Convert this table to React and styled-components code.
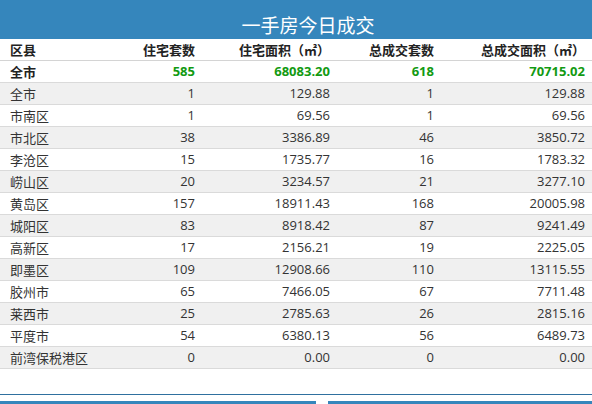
import React from "react";
import styled, { createGlobalStyle } from "styled-components";

const Global = createGlobalStyle`
  html, body { margin: 0; padding: 0; overflow: hidden; background: #fff; }
  body { font-family: "Open Sans", "Noto Sans CJK SC", sans-serif; }
`;

const Page = styled.div`
  width: 592px;
  display: flex;
  flex-direction: column;
`;

const TitleBar = styled.div`
  height: 39px;
  box-sizing: border-box;
  background: #3586bc;
  color: #fff;
  font-family: "Noto Sans CJK SC", sans-serif;
  font-size: 19px;
  line-height: 19px;
  padding: 15px 0 0 24px;
  text-align: center;
`;

const Table = styled.table`
  width: 592px;
  border-collapse: collapse;
  table-layout: fixed;
  font-size: 13px;
  color: #333;
`;

const HeadCell = styled.th`
  height: 21px;
  padding: 0 7px 0 ${(p) => (p.$left ? "10px" : "0")};
  text-align: ${(p) => (p.$left ? "left" : "right")};
  font-weight: bold;
  color: #222;
  font-family: "Noto Sans CJK SC", sans-serif;
  line-height: 21px;
  white-space: nowrap;
  border-bottom: 1px solid #d4d4d4;
`;

const Row = styled.tr`
  background: ${(p) => (p.$alt ? "#f0f0f0" : "#fff")};
`;

const Cell = styled.td`
  height: 21px;
  padding: 0 7px 0 ${(p) => (p.$left ? "10px" : "0")};
  text-align: ${(p) => (p.$left ? "left" : "right")};
  line-height: 21px;
  white-space: nowrap;
  border-bottom: 1px solid #dadada;
  font-family: ${(p) => (p.$left ? '"Noto Sans CJK SC", sans-serif' : '"Open Sans", sans-serif')};
  font-weight: ${(p) => (p.$total ? "bold" : "normal")};
  color: ${(p) => (p.$total ? (p.$left ? "#222" : "#129a12") : "#333")};
`;

const Spacer = styled.div`
  height: 25px;
`;

const Rule = styled.div`
  height: 1px;
  background: #2f709f;
`;

const Footer = styled.div`
  display: flex;
  gap: 12px;
  margin-top: 6px;
`;

const Bar = styled.div`
  height: 6px;
  background: #3586bc;
  flex: ${(p) => (p.$w ? `0 0 ${p.$w}px` : "1")};
`;

const cols = [110, 92, 135, 104, 151];
const headers = ["区县", "住宅套数", "住宅面积（㎡）", "总成交套数", "总成交面积（㎡）"];

const total = ["全市", "585", "68083.20", "618", "70715.02"];
const rows = [
  ["全市", "1", "129.88", "1", "129.88"],
  ["市南区", "1", "69.56", "1", "69.56"],
  ["市北区", "38", "3386.89", "46", "3850.72"],
  ["李沧区", "15", "1735.77", "16", "1783.32"],
  ["崂山区", "20", "3234.57", "21", "3277.10"],
  ["黄岛区", "157", "18911.43", "168", "20005.98"],
  ["城阳区", "83", "8918.42", "87", "9241.49"],
  ["高新区", "17", "2156.21", "19", "2225.05"],
  ["即墨区", "109", "12908.66", "110", "13115.55"],
  ["胶州市", "65", "7466.05", "67", "7711.48"],
  ["莱西市", "25", "2785.63", "26", "2815.16"],
  ["平度市", "54", "6380.13", "56", "6489.73"],
  ["前湾保税港区", "0", "0.00", "0", "0.00"],
];

export default function App() {
  return (
    <Page>
      <Global />
      <TitleBar>一手房今日成交</TitleBar>
      <Table>
        <colgroup>
          {cols.map((w, i) => (
            <col key={i} style={{ width: w }} />
          ))}
        </colgroup>
        <thead>
          <tr>
            {headers.map((h, i) => (
              <HeadCell key={i} $left={i === 0}>
                {h}
              </HeadCell>
            ))}
          </tr>
        </thead>
        <tbody>
          <Row>
            {total.map((v, i) => (
              <Cell key={i} $left={i === 0} $total>
                {v}
              </Cell>
            ))}
          </Row>
          {rows.map((r, ri) => (
            <Row key={ri} $alt={ri % 2 === 0}>
              {r.map((v, i) => (
                <Cell key={i} $left={i === 0}>
                  {v}
                </Cell>
              ))}
            </Row>
          ))}
        </tbody>
      </Table>
      <Spacer />
      <Rule />
      <Footer>
        <Bar $w={316} />
        <Bar />
      </Footer>
    </Page>
  );
}
